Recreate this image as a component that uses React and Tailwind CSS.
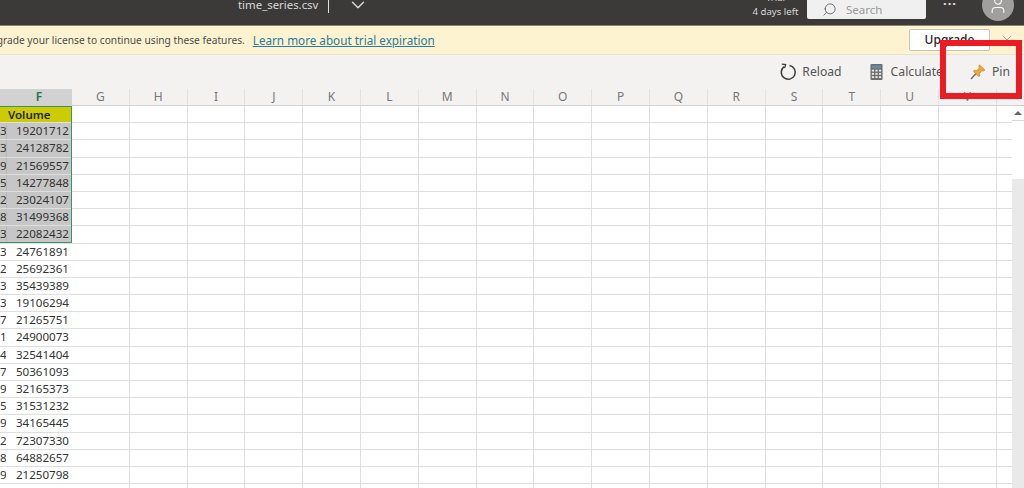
import { ChevronDown, Search, User, X } from "lucide-react";

const columns = ["G", "H", "I", "J", "K", "L", "M", "N", "O", "P", "Q", "R", "S", "T", "U", "V"];

const rows = [
  ["3", "19201712"],
  ["3", "24128782"],
  ["9", "21569557"],
  ["5", "14277848"],
  ["2", "23024107"],
  ["8", "31499368"],
  ["3", "22082432"],
  ["3", "24761891"],
  ["2", "25692361"],
  ["3", "35439389"],
  ["3", "19106294"],
  ["7", "21265751"],
  ["1", "24900073"],
  ["4", "32541404"],
  ["7", "50361093"],
  ["9", "32165373"],
  ["5", "31531232"],
  ["9", "34165445"],
  ["2", "72307330"],
  ["8", "64882657"],
  ["9", "21250798"],
  ["", ""],
];

function ReloadIcon() {
  return (
    <svg width="18" height="18" viewBox="0 0 18 18" fill="none" stroke="#3f3f3f" strokeWidth="1.5">
      <path d="M5.2 3.6A7 7 0 1 0 10.5 2.4" />
      <path d="M2.8 1.2 L6.6 1.6 L5.6 5.2" strokeWidth="1.3" />
    </svg>
  );
}

function CalculatorIcon() {
  return (
    <svg width="13" height="18" viewBox="0 0 14 18">
      <rect x="0.5" y="0.5" width="13" height="17" rx="1" fill="#6d6d6d" />
      <rect x="2" y="2" width="10" height="3" fill="#5f8fb0" />
      <g fill="#e8e8e8">
        <rect x="2" y="6.5" width="2.4" height="2" />
        <rect x="5.8" y="6.5" width="2.4" height="2" />
        <rect x="9.6" y="6.5" width="2.4" height="2" />
        <rect x="2" y="10" width="2.4" height="2" />
        <rect x="5.8" y="10" width="2.4" height="2" />
        <rect x="9.6" y="10" width="2.4" height="2" />
        <rect x="2" y="13.5" width="2.4" height="2" />
        <rect x="5.8" y="13.5" width="2.4" height="2" />
        <rect x="9.6" y="13.5" width="2.4" height="2" />
      </g>
    </svg>
  );
}

function PinIcon() {
  return (
    <svg width="16" height="16" viewBox="0 0 16 16">
      <path d="M1 15 L6 9.5" stroke="#6b6b6b" strokeWidth="1.3" fill="none" />
      <path d="M9.5 0.8 L15 6 L13.6 7 L11.8 6.8 L9.6 9.4 L9.8 12 L8.6 12.6 L3.4 7.2 L4.2 6.2 L6.8 6.4 L9.2 4 L8.8 2.2 Z" fill="#eda73a" stroke="#c9831f" strokeWidth="0.6" />
    </svg>
  );
}

export default function App() {
  return (
    <div
      className="relative flex h-[488px] w-[1024px] flex-col overflow-hidden bg-white text-[#333]"
      style={{ fontFamily: '"Noto Sans", sans-serif' }}
    >
      {/* Top bar */}
      <header className="flex h-[26px] shrink-0 items-start overflow-hidden whitespace-nowrap border-b border-[#8a8578] bg-[#3b3a39] text-[#d8d8d8]">
        <div className="ml-[238px] mt-[-4px] w-[78px] shrink-0 text-[11.4px] leading-[18px]">time_series.csv</div>
        <div className="ml-[12px] h-[13px] w-px shrink-0 bg-[#e0e0e0]" />
        <ChevronDown className="ml-[18px] mt-[-6px] shrink-0" size={22} strokeWidth={1.6} />
        <div className="ml-[382px] mt-[-9px] w-[49px] shrink-0 text-center text-[9.6px] leading-[14px]">
          <div>Trial</div>
          <div>4 days left</div>
        </div>
        <div className="ml-[7px] flex h-[19px] w-[119px] shrink-0 items-center gap-[9px] rounded-b-[2px] bg-[#f0f0f0] pl-[15px] text-[11.5px] text-[#999]">
          <Search className="-scale-x-100 text-[#555]" size={15} strokeWidth={1.3} />
          Search
        </div>
        <div className="ml-[17px] mt-[-6px] w-[16px] shrink-0 text-[13px] font-bold tracking-[1px] text-[#e6e6e6]">···</div>
        <div className="ml-[23px] mt-[-11px] flex h-[32px] w-[32px] shrink-0 items-center justify-center rounded-full bg-[#a19f9d]">
          <User className="text-white" size={20} strokeWidth={1.3} />
        </div>
      </header>

      {/* Trial banner */}
      <div className="flex h-[29px] shrink-0 items-center whitespace-nowrap border-b border-[#e8e4d4] bg-[#fdf3d0] text-[10.2px]">
        <div className="ml-[-17px] pt-[1px] text-[#4d4d4d]">Upgrade your license to continue using these features.</div>
        <a href="#" className="ml-[8px] pt-[1px] text-[11.7px] text-[#2a7a9e] underline">
          Learn more about trial expiration
        </a>
        <button className="ml-auto flex h-[22px] w-[81px] items-center justify-center rounded-[2px] border border-[#c4c4c4] bg-white text-[12px] font-medium text-[#222]">
          Upgrade
        </button>
        <X className="ml-[9px] mr-[9px] text-[#8a8a8a]" size={16} strokeWidth={1.2} />
      </div>

      {/* Toolbar */}
      <div className="flex h-[34px] shrink-0 items-center justify-end whitespace-nowrap bg-[#f3f2f1] text-[12.2px] text-[#555]">
        <ReloadIcon />
        <span className="ml-[5px]">Reload</span>
        <span className="ml-[28px]">
          <CalculatorIcon />
        </span>
        <span className="ml-[8px]">Calculate</span>
        <span className="ml-[27px]">
          <PinIcon />
        </span>
        <span className="ml-[6px] mr-[14px]">Pin</span>
      </div>

      {/* Column headers */}
      <div className="flex h-[17px] shrink-0 border-b border-[#d0d0d0] bg-[#f3f2f1] text-[12px] leading-[16px] text-[#777]">
        <div className="w-[72px] shrink-0 bg-[#d2d2d2] pl-[6px] text-center font-semibold text-[#217346]">F</div>
        {columns.map((col) => (
          <div key={col} className="w-[57.8px] shrink-0 border-r border-[#e1e1e1] text-center">
            {col}
          </div>
        ))}
      </div>

      {/* Sheet */}
      <div className="relative flex min-h-0 flex-1">
        <div className="min-w-0 flex-1 overflow-hidden">
          <div className="flex h-[17.2px] border-b border-[#dedede] text-[11.5px] font-semibold leading-[18px] text-[#222]">
            <div className="w-[72px] shrink-0 bg-[#cdcc00] pl-[8px]">Volume</div>
            {columns.map((col) => (
              <div key={col} className="w-[57.8px] shrink-0 border-r border-[#dedede]" />
            ))}
          </div>
          {rows.map(([tail, volume], i) => (
            <div key={i} className="flex h-[17.2px] border-b border-[#dedede] text-[11.6px] leading-[16px] text-[#333]">
              <div className={`w-[6px] shrink-0 overflow-hidden text-right ${i < 7 ? "bg-[#c6c6c6]" : ""}`}>{tail}</div>
              <div className={`w-[66px] shrink-0 pr-[3px] text-right ${i < 7 ? "border-l border-[#b8b8b8] bg-[#c6c6c6]" : ""}`}>{volume}</div>
              {columns.map((col) => (
                <div key={col} className="w-[57.8px] shrink-0 border-r border-[#dedede]" />
              ))}
            </div>
          ))}
        </div>

        {/* Scrollbar */}
        <div className="flex w-[12px] shrink-0 flex-col bg-[#e9e9e9]">
          <div className="flex h-[15px] items-center justify-center border-b border-[#d8d8d8] bg-white">
            <div className="h-0 w-0 border-x-[4px] border-b-[4px] border-x-transparent border-b-[#666]" />
          </div>
          <div className="h-[58px] bg-white" />
        </div>

        {/* Selected range outline */}
        <div className="pointer-events-none absolute left-0 top-0 h-[137px] w-[72px] border-[1.5px] border-l-0 border-[#3f8f6a]" />
      </div>

      {/* Annotation */}
      <div className="pointer-events-none absolute left-[940px] top-[40px] h-[59px] w-[82px] border-[6px] border-[#ed1c24]" />
    </div>
  );
}
